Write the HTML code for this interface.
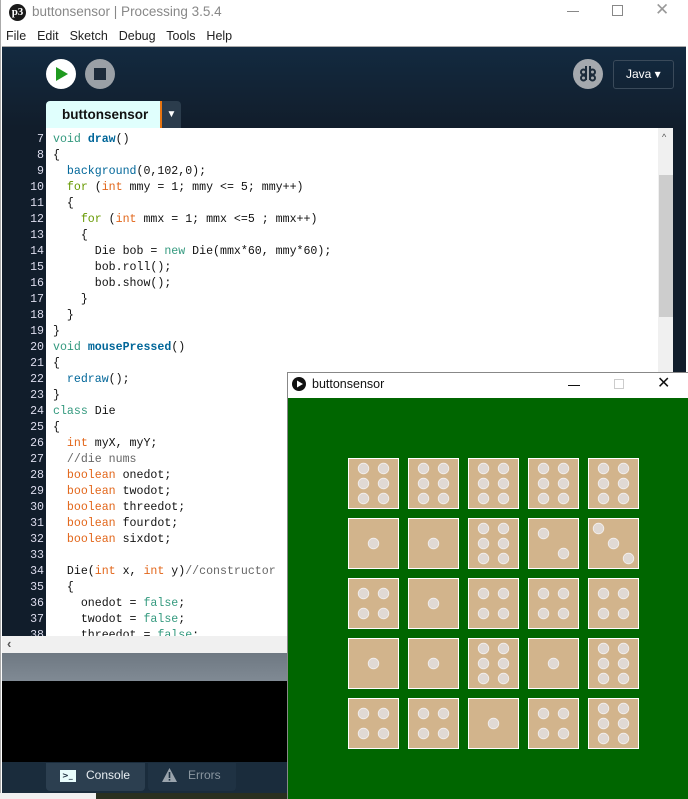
<!DOCTYPE html>
<html><head><meta charset="utf-8">
<style>
*{margin:0;padding:0;box-sizing:border-box}
body{width:688px;height:799px;overflow:hidden;background:#f0f0f0;position:relative;font-family:"Liberation Sans",sans-serif}
.a{position:absolute}
pre{font-family:"Liberation Mono",monospace;font-size:11.6px;line-height:16px;color:#111}
.k{color:#33997e}.f{color:#669900}.t{color:#e2661a}.b{color:#006699;font-weight:bold}.n{color:#006699}.c{color:#666}
</style></head><body>
<div class="a" style="left:0;top:0;width:688px;height:793px;background:#fff;border-left:1px solid #aaa"></div>
<div class="a" style="left:96px;top:793px;width:191px;height:6px;background:#2a3020"></div>
<div class="a" style="left:9px;top:4px;width:17px;height:17px;border-radius:50%;background:#1a1a1a;color:#fff;font:bold 11px 'Liberation Serif',serif;text-align:center;line-height:17px">p3</div>
<div class="a" style="left:32px;top:4px;font-size:13.5px;color:#888">buttonsensor | Processing 3.5.4</div>
<div class="a" style="left:567px;top:11px;width:12px;height:1px;background:#888"></div>
<div class="a" style="left:612px;top:5px;width:11px;height:11px;border:1px solid #888"></div>
<div class="a" style="left:655px;top:0px;font-size:17px;color:#999">✕</div>
<div class="a" style="left:6px;top:29px;font-size:12.5px;color:#222;word-spacing:2px">File&nbsp; Edit&nbsp; Sketch&nbsp; Debug&nbsp; Tools&nbsp; Help</div>
<div class="a" style="left:2px;top:46px;width:684px;height:1px;background:#aaa"></div>
<div class="a" style="left:2px;top:47px;width:684px;height:746px;background:linear-gradient(#132a40,#111d2b 80px,#111d2b)"></div>
<div class="a" style="left:46px;top:59px;width:30px;height:30px;border-radius:50%;background:#fff"></div>
<svg class="a" style="left:55px;top:66px" width="14" height="16"><path d="M1 1L13 8L1 15Z" fill="#1f9a1f"/></svg>
<div class="a" style="left:85px;top:59px;width:30px;height:30px;border-radius:50%;background:#9aa0a6"></div>
<div class="a" style="left:94px;top:68px;width:12px;height:12px;background:#1c2b3a"></div>
<div class="a" style="left:573px;top:59px;width:30px;height:30px;border-radius:50%;background:#a5a9ae"></div>
<svg class="a" style="left:579px;top:64px" width="18" height="20"><g fill="none" stroke="#1c2b3a" stroke-width="2"><path d="M7 2v14M11 2v14"/><circle cx="4.5" cy="8" r="2.5"/><circle cx="4.5" cy="14" r="2.5"/><circle cx="13.5" cy="8" r="2.5"/><circle cx="13.5" cy="14" r="2.5"/></g></svg>
<div class="a" style="left:613px;top:60px;width:61px;height:29px;border:1px solid #3a4a5a;border-radius:3px;color:#fff;font-size:12px;line-height:27px;padding-left:12px">Java ▾</div>
<div class="a" style="left:46px;top:101px;width:114px;height:27px;background:#e0fffd;border-radius:4px 0 0 0;font-weight:bold;font-size:13.5px;color:#111;line-height:27px;padding-left:16px">buttonsensor</div>
<div class="a" style="left:160px;top:101px;width:2px;height:27px;background:#e87511"></div>
<div class="a" style="left:162px;top:101px;width:19px;height:27px;background:#2b3c4c;border-radius:0 4px 0 0;color:#fff;font-size:10px;text-align:center;line-height:27px">▼</div>
<div class="a" style="left:46px;top:128px;width:612px;height:508px;background:#fff;overflow:hidden">
<pre class="a" style="left:7px;top:4px">
<span class="k">void</span> <span class="b">draw</span>()
{
  <span class="n">background</span>(0,102,0);
  <span class="f">for</span> (<span class="t">int</span> mmy = 1; mmy &lt;= 5; mmy++)
  {
    <span class="f">for</span> (<span class="t">int</span> mmx = 1; mmx &lt;=5 ; mmx++)
    {
      Die bob = <span class="k">new</span> Die(mmx*60, mmy*60);
      bob.roll();
      bob.show();
    }
  }
}
<span class="k">void</span> <span class="b">mousePressed</span>()
{
  <span class="n">redraw</span>();
}
<span class="k">class</span> Die
{
  <span class="t">int</span> myX, myY;
  <span class="c">//die nums</span>
  <span class="t">boolean</span> onedot;
  <span class="t">boolean</span> twodot;
  <span class="t">boolean</span> threedot;
  <span class="t">boolean</span> fourdot;
  <span class="t">boolean</span> sixdot;

  Die(<span class="t">int</span> x, <span class="t">int</span> y)<span class="c">//constructor</span>
  {
    onedot = <span class="k">false</span>;
    twodot = <span class="k">false</span>;
    threedot = <span class="k">false</span>;
</pre></div>
<pre class="a" style="left:2px;top:132px;width:42px;text-align:right;color:#dde">7
8
9
10
11
12
13
14
15
16
17
18
19
20
21
22
23
24
25
26
27
28
29
30
31
32
33
34
35
36
37
38</pre>
<div class="a" style="left:658px;top:128px;width:15px;height:508px;background:#f0f0f0"></div>
<div class="a" style="left:662px;top:132px;font-size:9px;color:#555">^</div>
<div class="a" style="left:659px;top:175px;width:14px;height:142px;background:#cdcdcd"></div>
<div class="a" style="left:2px;top:636px;width:671px;height:17px;background:#f0f0f0;color:#555;font-size:13px;font-weight:bold;padding-left:5px;line-height:16px">‹</div>
<div class="a" style="left:2px;top:653px;width:684px;height:28px;background:linear-gradient(#6e7882,#808a94)"></div>
<div class="a" style="left:2px;top:681px;width:684px;height:81px;background:#000"></div>
<div class="a" style="left:2px;top:762px;width:684px;height:31px;background:#1a2c3c"></div>
<div class="a" style="left:46px;top:763px;width:99px;height:28px;background:#2c3f50;border-radius:0 0 4px 4px"></div>
<div class="a" style="left:60px;top:770px;width:16px;height:12px;background:#e8fcfc;color:#1a2c3c;font:bold 8px 'DejaVu Sans',sans-serif;line-height:12px;padding-left:2px">&gt;_</div>
<div class="a" style="left:86px;top:768px;color:#e8eef2;font-size:12px">Console</div>
<div class="a" style="left:148px;top:763px;width:88px;height:28px;background:#1f3243;border-radius:0 0 4px 4px"></div>
<svg class="a" style="left:161px;top:767px" width="17" height="16"><path d="M8.5 1L16 15H1Z" fill="#9aa4ad"/><rect x="7.7" y="5" width="1.6" height="6" fill="#1f3243"/><rect x="7.7" y="12" width="1.6" height="1.6" fill="#1f3243"/></svg>
<div class="a" style="left:188px;top:768px;color:#8a96a0;font-size:12px">Errors</div>
<div class="a" style="left:287px;top:372px;width:401px;height:427px;background:#fff;border:1px solid #888;border-right:none;border-bottom:none"></div>
<div class="a" style="left:292px;top:377px;width:14px;height:14px;border-radius:50%;background:#111"></div>
<svg class="a" style="left:296px;top:380px" width="8" height="8"><path d="M1 0.5L7 4L1 7.5Z" fill="#fff"/></svg>
<div class="a" style="left:312px;top:377px;font-size:12.5px;color:#111">buttonsensor</div>
<div class="a" style="left:568px;top:385px;width:12px;height:1px;background:#111"></div>
<div class="a" style="left:614px;top:379px;width:10px;height:10px;border:1px solid #ccc"></div>
<div class="a" style="left:657px;top:373px;font-size:16px;color:#111">✕</div>
<svg class="a" style="left:288px;top:398px" width="400" height="401" viewBox="288 398 400 401">
<rect x="288" y="398" width="400" height="401" fill="#006600"/>
<defs>
<g id="d1"><rect x=".5" y=".5" width="50" height="50" fill="#d2b48c" stroke="#fff"/><circle cx="25.5" cy="25.5" r="5.3" fill="#e0d9d4" stroke="#f4f0ee" stroke-width=".8"/></g>
<g id="d2"><rect x=".5" y=".5" width="50" height="50" fill="#d2b48c" stroke="#fff"/><g fill="#e0d9d4" stroke="#f4f0ee" stroke-width=".8"><circle cx="15.5" cy="15.5" r="5.3"/><circle cx="35.5" cy="35.5" r="5.3"/></g></g>
<g id="d3"><rect x=".5" y=".5" width="50" height="50" fill="#d2b48c" stroke="#fff"/><g fill="#e0d9d4" stroke="#f4f0ee" stroke-width=".8"><circle cx="10.5" cy="10.5" r="5.3"/><circle cx="25.5" cy="25.5" r="5.3"/><circle cx="40.5" cy="40.5" r="5.3"/></g></g>
<g id="d4"><rect x=".5" y=".5" width="50" height="50" fill="#d2b48c" stroke="#fff"/><g fill="#e0d9d4" stroke="#f4f0ee" stroke-width=".8"><circle cx="15.5" cy="15.5" r="5.3"/><circle cx="35.5" cy="15.5" r="5.3"/><circle cx="15.5" cy="35.5" r="5.3"/><circle cx="35.5" cy="35.5" r="5.3"/></g></g>
<g id="d6"><rect x=".5" y=".5" width="50" height="50" fill="#d2b48c" stroke="#fff"/><g fill="#e0d9d4" stroke="#f4f0ee" stroke-width=".8"><circle cx="15.5" cy="10.5" r="5.3"/><circle cx="35.5" cy="10.5" r="5.3"/><circle cx="15.5" cy="25.5" r="5.3"/><circle cx="35.5" cy="25.5" r="5.3"/><circle cx="15.5" cy="40.5" r="5.3"/><circle cx="35.5" cy="40.5" r="5.3"/></g></g>
</defs>
<use href="#d6" x="348" y="458"/><use href="#d6" x="408" y="458"/><use href="#d6" x="468" y="458"/><use href="#d6" x="528" y="458"/><use href="#d6" x="588" y="458"/>
<use href="#d1" x="348" y="518"/><use href="#d1" x="408" y="518"/><use href="#d6" x="468" y="518"/><use href="#d2" x="528" y="518"/><use href="#d3" x="588" y="518"/>
<use href="#d4" x="348" y="578"/><use href="#d1" x="408" y="578"/><use href="#d4" x="468" y="578"/><use href="#d4" x="528" y="578"/><use href="#d4" x="588" y="578"/>
<use href="#d1" x="348" y="638"/><use href="#d1" x="408" y="638"/><use href="#d6" x="468" y="638"/><use href="#d1" x="528" y="638"/><use href="#d6" x="588" y="638"/>
<use href="#d4" x="348" y="698"/><use href="#d4" x="408" y="698"/><use href="#d1" x="468" y="698"/><use href="#d4" x="528" y="698"/><use href="#d6" x="588" y="698"/>
</svg>
</body></html>
